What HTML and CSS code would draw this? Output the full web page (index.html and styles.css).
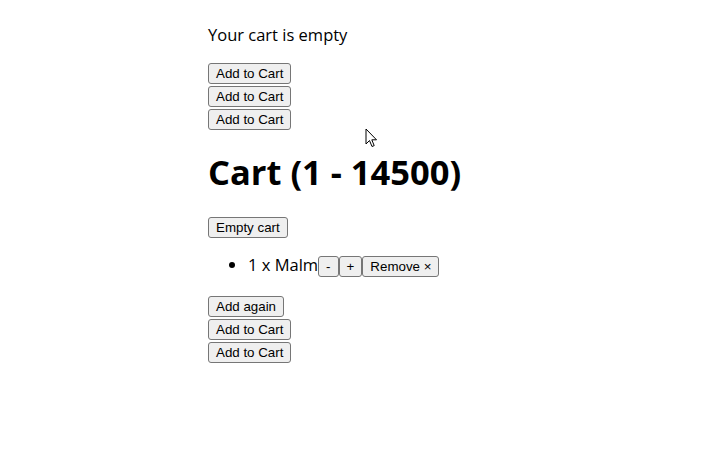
FILE: index.html
```html
<!DOCTYPE html>
<html lang="en">
<head>
    <meta charset="UTF-8">
    <title>Cart</title>
    <link rel="stylesheet" href="styles.css">
</head>
<body>

    <div class="app">
        <p class="cart-status">Your cart is empty</p>

        <div class="products">
            <button class="btn">Add to Cart</button>
            <button class="btn">Add to Cart</button>
            <button class="btn">Add to Cart</button>
        </div>

        <h1 class="cart-title">Cart (1 - 14500)</h1>

        <button class="btn btn-inline">Empty cart</button>

        <ul class="cart-items">
            <li>1 x Malm<button class="btn btn-inline">-</button><button class="btn btn-inline">+</button><button class="btn btn-inline">Remove &times;</button></li>
        </ul>

        <div class="products">
            <button class="btn">Add again</button>
            <button class="btn">Add to Cart</button>
            <button class="btn">Add to Cart</button>
        </div>
    </div>

    <svg class="cursor" width="13" height="21" viewBox="0 0 13 21">
        <path d="M1 1 L1 16 L4.5 12.5 L7 18.5 L9.2 17.6 L6.8 11.8 L11.5 11.8 Z" fill="#fff" stroke="#000" stroke-width="1" stroke-linejoin="miter"/>
    </svg>

</body>
</html>
```

FILE: styles.css
```css
body {
    margin: 0;
    font-family: 'Open Sans', 'Noto Sans', sans-serif;
    font-size: 16.5px;
    color: #000;
    background-color: #fff;
}
.app {
    width: 300px;
    margin: 0 auto;
    padding-top: 24px;
}
.cart-status {
    margin: 0 0 17px;
    line-height: 22px;
}
.btn {
    font-family: 'Liberation Sans', Arial, sans-serif;
    font-size: 13.333px;
    line-height: 15px;
    padding: 2px 7px;
    color: #000;
    background-color: #efefef;
    border: 1px solid #767676;
    border-radius: 3px;
}
.products .btn {
    display: block;
    margin-bottom: 2px;
}
.cart-title {
    margin: 21px 0 21px;
    font-size: 34.5px;
    line-height: 42px;
    font-weight: bold;
}
.btn-inline {
    display: inline-block;
    vertical-align: baseline;
}
.cart-items {
    margin: 16px 0 19px;
    padding-left: 40px;
    line-height: 22px;
}
.cursor {
    position: absolute;
    left: 365px;
    top: 128px;
}
```
